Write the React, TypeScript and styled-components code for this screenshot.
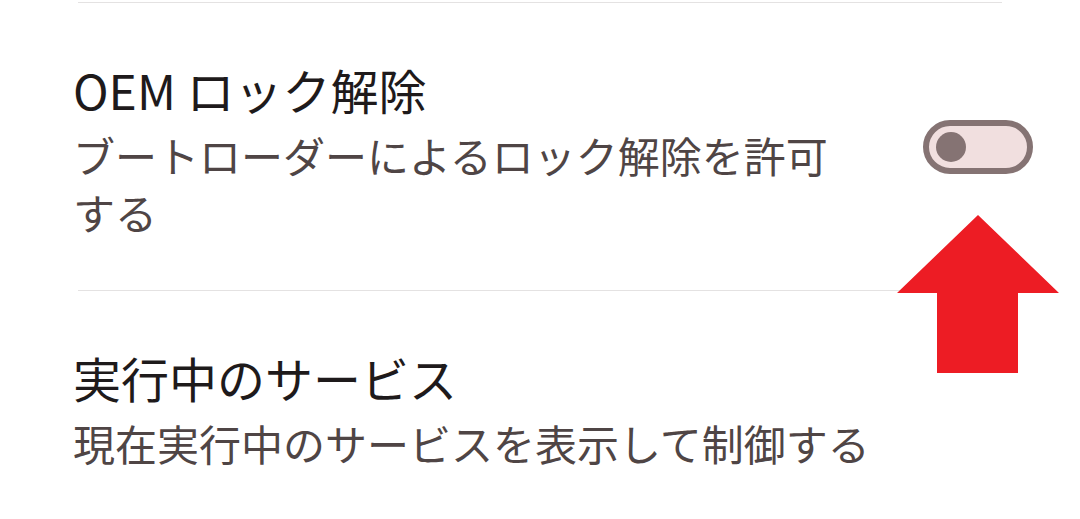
import React, { useState } from 'react';
import styled, { createGlobalStyle } from 'styled-components';

const GlobalStyle = createGlobalStyle`
  html, body {
    margin: 0;
    padding: 0;
    background: #ffffff;
  }
  body {
    font-family: 'Noto Sans CJK JP', 'Noto Sans', sans-serif;
    overflow: hidden;
  }
`;

const Screen = styled.div`
  position: relative;
  width: 1080px;
  height: 519px;
  padding-top: 2px;
  box-sizing: border-box;
  background: #ffffff;
  overflow: hidden;
`;

const Divider = styled.div`
  height: 1px;
  margin: 0 78px;
  background: #e4e2e2;
`;

const Row = styled.div`
  display: flex;
  align-items: center;
  gap: 80px;
  padding: 56px 47px 50px 73px;
`;

const TextBlock = styled.div`
  flex: 1;
  min-width: 0;
`;

const Title = styled.div`
  font-size: 48px;
  line-height: 60px;
  color: #1e1a1b;
  margin-bottom: 7px;
`;

const Summary = styled.div`
  font-size: 42px;
  line-height: 57px;
  color: #4f4545;
`;

const Track = styled.button<{ $on: boolean }>`
  flex: none;
  display: flex;
  align-items: center;
  justify-content: ${(p) => (p.$on ? 'flex-end' : 'flex-start')};
  width: 110px;
  height: 54px;
  margin-bottom: 6px;
  padding: 0 7px;
  box-sizing: border-box;
  border: 6px solid #857373;
  border-radius: 27px;
  background: #f1dfdf;
  cursor: pointer;
`;

const Thumb = styled.span`
  width: 30px;
  height: 30px;
  border-radius: 50%;
  background: #857373;
`;

const Arrow = styled.svg`
  position: absolute;
  left: 897px;
  top: 215px;
`;

type Pref = {
  title: string;
  summary: string;
  toggle?: boolean;
};

const prefs: Pref[] = [
  { title: 'OEM ロック解除', summary: 'ブートローダーによるロック解除を許可する', toggle: true },
  { title: '実行中のサービス', summary: '現在実行中のサービスを表示して制御する' },
];

function Preference({ pref }: { pref: Pref }) {
  const [on, setOn] = useState(false);
  return (
    <Row>
      <TextBlock>
        <Title>{pref.title}</Title>
        <Summary>{pref.summary}</Summary>
      </TextBlock>
      {pref.toggle && (
        <Track $on={on} onClick={() => setOn(!on)} aria-pressed={on}>
          <Thumb />
        </Track>
      )}
    </Row>
  );
}

export default function App() {
  return (
    <Screen>
      <GlobalStyle />
      {prefs.map((p) => (
        <React.Fragment key={p.title}>
          <Divider />
          <Preference pref={p} />
        </React.Fragment>
      ))}
      <Arrow width="162" height="158" viewBox="0 0 162 158">
        <polygon points="81,0 162,78 121,78 121,158 40,158 40,78 0,78" fill="#ed1c24" />
      </Arrow>
    </Screen>
  );
}
